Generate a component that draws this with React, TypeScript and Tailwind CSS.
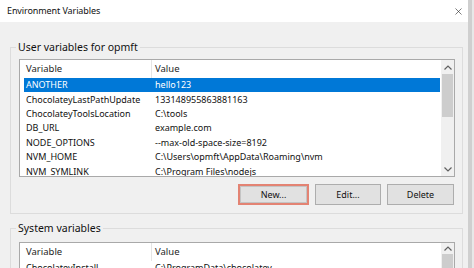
import { X } from "lucide-react";

type Row = { name: string; value: string };

const userVars: Row[] = [
  { name: "ANOTHER", value: "hello123" },
  { name: "ChocolateyLastPathUpdate", value: "133148955863881163" },
  { name: "ChocolateyToolsLocation", value: "C:\\tools" },
  { name: "DB_URL", value: "example.com" },
  { name: "NODE_OPTIONS", value: "--max-old-space-size=8192" },
  { name: "NVM_HOME", value: "C:\\Users\\opmft\\AppData\\Roaming\\nvm" },
  { name: "NVM_SYMLINK", value: "C:\\Program Files\\nodejs" },
];

const systemVars: Row[] = [
  { name: "ChocolateyInstall", value: "C:\\ProgramData\\chocolatey" },
  { name: "ComSpec", value: "C:\\WINDOWS\\system32\\cmd.exe" },
];

function Chevron({ down }: { down?: boolean }) {
  return (
    <svg width="8" height="5" viewBox="0 0 8 5" className={down ? "rotate-180" : ""}>
      <path d="M0.5 4.5 L4 1 L7.5 4.5" fill="none" stroke="#606060" strokeWidth="1.2" />
    </svg>
  );
}

function ListView({ rows, selected, height }: { rows: Row[]; selected?: number; height: string }) {
  return (
    <div className={`flex border border-[#a9a9a9] bg-white overflow-hidden ${height}`}>
      <div className="flex-1 flex flex-col min-w-0 text-[9px]">
        <div className="flex h-[18px] shrink-0 items-center text-[#1e1e1e] text-[9.5px]">
          <div className="w-[132px] h-full flex items-center pl-[6px] border-r border-[#e5e5e5]">Variable</div>
          <div className="pl-[3px]">Value</div>
        </div>
        {rows.map((r, i) => (
          <div
            key={r.name}
            className={`flex h-[14.4px] shrink-0 items-center ml-[4px] mr-[1px] whitespace-nowrap ${
              i === selected ? "bg-[#0078d7] text-white" : "text-[#111]"
            }`}
          >
            <div className="w-[131px] shrink-0 pl-[2px] overflow-hidden">{r.name}</div>
            <div>{r.value}</div>
          </div>
        ))}
      </div>
      <div className="w-[13px] shrink-0 bg-[#f0f0f0] flex flex-col">
        <div className="h-[14px] flex items-center justify-center">
          <Chevron />
        </div>
        <div className="h-[43px] mx-[1px] bg-[#cdcdcd]" />
        <div className="flex-1" />
        <div className="h-[14px] flex items-center justify-center">
          <Chevron down />
        </div>
      </div>
    </div>
  );
}

export default function App() {
  return (
    <div className="w-[474px] h-[268px] overflow-hidden flex bg-[#e8e8e8] text-[10.5px] leading-[14px] font-['Noto_Sans',sans-serif]">
      <div className="w-[468px] shrink-0 flex flex-col bg-[#f0f0f0]">
        <div className="h-[22px] shrink-0 bg-white flex items-center justify-between pl-[7px] pr-[4px] text-[#111]">
          <span className="text-[9px] tracking-[-0.1px]">Environment Variables</span>
          <X size={11} strokeWidth={1.3} className="text-[#222]" />
        </div>

        <div className="flex flex-col pl-[10px] pr-[5px]">
          <div className="relative mt-[25px] border border-[#dcdcdc] pt-[11px] pl-[8px] pr-[7px] pb-[8px]">
            <span className="absolute -top-[8px] left-[5px] px-[2px] bg-[#f0f0f0] text-[#111]">
              User variables for opmft
            </span>
            <ListView rows={userVars} selected={0} height="h-[118px]" />
            <div className="flex justify-end gap-[6px] mt-[7px] pr-[1px] text-[9px]">
              <div className="w-[71px] h-[21px] border-2 border-[#e38373]">
                <button className="w-full h-full border border-[#c4c4c4] bg-[#e1e1e1] text-[#111] flex items-center justify-center">
                  New...
                </button>
              </div>
              <button className="w-[66px] h-[21px] border border-[#adadad] bg-[#e1e1e1] text-[#111] flex items-center justify-center">
                Edit...
              </button>
              <button className="w-[67px] h-[21px] border border-[#adadad] bg-[#e1e1e1] text-[#111] flex items-center justify-center">
                Delete
              </button>
            </div>
          </div>

          <div className="relative mt-[14px] border border-[#dcdcdc] pt-[13px] pl-[8px] pr-[7px] h-[60px]">
            <span className="absolute -top-[8px] left-[5px] px-[2px] bg-[#f0f0f0] text-[#111]">
              System variables
            </span>
            <ListView rows={systemVars} height="h-[60px]" />
          </div>
        </div>
      </div>
      <div className="w-[4px] shrink-0 bg-[#cfcfcf]" />
    </div>
  );
}
